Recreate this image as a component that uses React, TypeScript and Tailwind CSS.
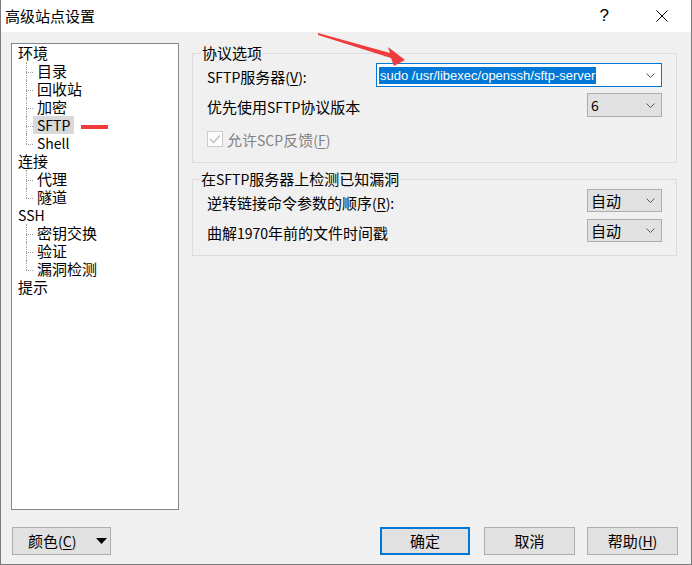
import React from "react";

const FONT = "font-['Noto_Sans_CJK_SC',sans-serif]";

function Chevron() {
  return (
    <svg width="9" height="5" viewBox="0 0 9 5" className="ml-auto shrink-0">
      <path d="M0.5 0.5 L4.5 4.5 L8.5 0.5" fill="none" stroke="#555" strokeWidth="1" />
    </svg>
  );
}

function U({ children }: { children: React.ReactNode }) {
  return <span className="underline underline-offset-2 decoration-1">{children}</span>;
}

function L({ children }: { children: React.ReactNode }) {
  return <span className="text-[14px]">{children}</span>;
}

type Node = { label: React.ReactNode; key: string; children: { key: string; label: React.ReactNode }[] };
const tree: Node[] = [
  {
    key: "env",
    label: "环境",
    children: [
      { key: "dir", label: "目录" },
      { key: "bin", label: "回收站" },
      { key: "enc", label: "加密" },
      { key: "SFTP", label: <L>SFTP</L> },
      { key: "shell", label: <L>Shell</L> },
    ],
  },
  {
    key: "conn",
    label: "连接",
    children: [
      { key: "proxy", label: "代理" },
      { key: "tunnel", label: "隧道" },
    ],
  },
  {
    key: "ssh",
    label: <L>SSH</L>,
    children: [
      { key: "kex", label: "密钥交换" },
      { key: "auth", label: "验证" },
      { key: "bugs", label: "漏洞检测" },
    ],
  },
  { key: "tips", label: "提示", children: [] },
];

function Tree() {
  return (
    <div className="h-[467px] w-[168px] border border-[#828790] bg-white text-[15px] leading-[18px] text-black">
      {tree.map((n) => (
        <div key={n.key}>
          <div className="flex h-[18px] items-center pl-[6px]">{n.label}</div>
          {n.children.map((c, i) => {
            const last = i === n.children.length - 1;
            const sel = c.key === "SFTP";
            return (
              <div key={c.key} className="flex h-[18px] items-stretch">
                <div className="w-[14px] shrink-0" />
                <div className="relative w-[7px] shrink-0">
                  <div
                    className={
                      last
                        ? "absolute left-0 top-0 h-[10px] border-l border-dotted border-[#a0a0a0]"
                        : "absolute left-0 top-0 h-full border-l border-dotted border-[#a0a0a0]"
                    }
                  />
                  <div className="absolute left-0 top-[10px] w-full border-t border-dotted border-[#a0a0a0]" />
                </div>
                <div className={sel ? "flex items-center bg-[#d9d9d9] px-[4px]" : "flex items-center px-[4px]"}>{c.label}</div>
                {sel && <div className="ml-[7px] mt-[9px] h-[4px] w-[27px] bg-[#ef3b3b]" />}
              </div>
            );
          })}
        </div>
      ))}
    </div>
  );
}

function Select({ value, tall }: { value: React.ReactNode; tall?: boolean }) {
  return (
    <div
      className={
        tall
          ? "ml-auto flex h-[24px] w-[75px] items-center border border-[#adadad] bg-[#e1e1e1] pl-[3px] pr-[6px]"
          : "ml-auto flex h-[23px] w-[75px] items-center border border-[#adadad] bg-[#e1e1e1] pl-[3px] pr-[6px]"
      }
    >
      <span>{value}</span>
      <Chevron />
    </div>
  );
}

function Button({ children, primary, className }: { children: React.ReactNode; primary?: boolean; className: string }) {
  return (
    <div
      className={
        (primary
          ? "flex h-[28px] items-center justify-center border-2 border-[#0078d7] bg-[#e1e1e1] "
          : "flex h-[28px] items-center justify-center border border-[#adadad] bg-[#e1e1e1] ") + className
      }
    >
      {children}
    </div>
  );
}

export default function App() {
  return (
    <div
      className={`relative flex h-[565px] w-[692px] flex-col overflow-hidden border-x border-b border-[#7a7a7a] bg-[#f0f0f0] text-[15px] leading-[18px] text-black ${FONT}`}
    >
      {/* title bar */}
      <div className="flex h-[32px] shrink-0 items-center bg-white pl-[4px]">
        <span className="text-[15px]">高级站点设置</span>
        <span className="ml-auto mr-[47px] font-['Liberation_Sans',sans-serif] text-[17px]">?</span>
        <svg width="12" height="12" viewBox="0 0 12 12" className="mr-[23px]">
          <path d="M0.5 0.5 L11.5 11.5 M11.5 0.5 L0.5 11.5" stroke="#000" strokeWidth="1" fill="none" />
        </svg>
      </div>

      {/* body */}
      <div className="flex flex-1 flex-col pl-[10px] pt-[11px]">
        <div className="flex">
          <Tree />
          <div className="ml-[13px] mt-[1px] flex w-[485px] flex-col">
            <fieldset className="border border-[#dcdcdc] px-[14px] pb-[12px] pt-[1px]">
              <legend className="-ml-[6px] px-[1px] leading-[18px]">协议选项</legend>
              <div className="flex h-[24px] items-center">
                <span className="mt-[4px]">
                  <L>SFTP</L>服务器<L>(<U>V</U>):</L>
                </span>
                <div className="ml-auto flex h-[24px] w-[286px] items-center border border-[#0078d7] bg-white pl-[2px] pr-[6px]">
                  <span className="whitespace-nowrap bg-[#0078d7] px-[1px] font-['Liberation_Sans',sans-serif] text-[13px] leading-[17px] text-white">
                    sudo /usr/libexec/openssh/sftp-server
                  </span>
                  <Chevron />
                </div>
              </div>
              <div className="mt-[6px] flex h-[24px] items-center">
                <span className="mt-[4px]">
                  优先使用<L>SFTP</L>协议版本
                </span>
                <Select value={<L>6</L>} tall />
              </div>
              <div className="mt-[11px] flex h-[22px] items-center text-[#838383]">
                <div className="flex h-[16px] w-[16px] items-center justify-center border border-[#cccccc] bg-[#fcfcfc]">
                  <svg width="12" height="10" viewBox="0 0 12 10">
                    <path d="M1 5 L4.5 8.5 L11 1.5" fill="none" stroke="#c4c4c4" strokeWidth="1.6" />
                  </svg>
                </div>
                <span className="ml-[4px] mt-[2px]">
                  允许<L>SCP</L>反馈<L>(<U>F</U>)</L>
                </span>
              </div>
            </fieldset>

            <fieldset className="mt-[7px] border border-[#dcdcdc] px-[14px] pb-[13px] pt-[1px]">
              <legend className="-ml-[7px] px-[1px] leading-[18px]">
                在<L>SFTP</L>服务器上检测已知漏洞
              </legend>
              <div className="flex h-[23px] items-center">
                <span className="mt-[4px]">
                  逆转链接命令参数的顺序<L>(<U>R</U>):</L>
                </span>
                <Select value="自动" />
              </div>
              <div className="mt-[7px] flex h-[23px] items-center">
                <span className="mt-[4px]">
                  曲解<L>1970</L>年前的文件时间戳
                </span>
                <Select value="自动" />
              </div>
            </fieldset>
          </div>
        </div>

        {/* buttons */}
        <div className="mt-[17px] flex">
          <Button className="ml-[1px] w-[99px] justify-start pl-[15px]">
            <span>
              颜色<L>(<U>C</U>)</L>
            </span>
            <svg width="11" height="6" viewBox="0 0 11 6" className="ml-[20px]">
              <path d="M0 0 H11 L5.5 6 Z" fill="#000" />
            </svg>
          </Button>
          <Button primary className="ml-auto w-[90px]">
            确定
          </Button>
          <Button className="ml-[14px] w-[91px]">取消</Button>
          <Button className="ml-[12px] mr-[13px] w-[91px]">
            <span>
              帮助<L>(<U>H</U>)</L>
            </span>
          </Button>
        </div>
      </div>

      {/* annotation arrow */}
      <svg className="pointer-events-none absolute left-0 top-0" width="692" height="565" viewBox="0 0 692 565">
        <polygon points="317,33 389,53 387,47 404,60 393,66 390,58 317,35" fill="#ef3b3b" />
      </svg>
    </div>
  );
}
